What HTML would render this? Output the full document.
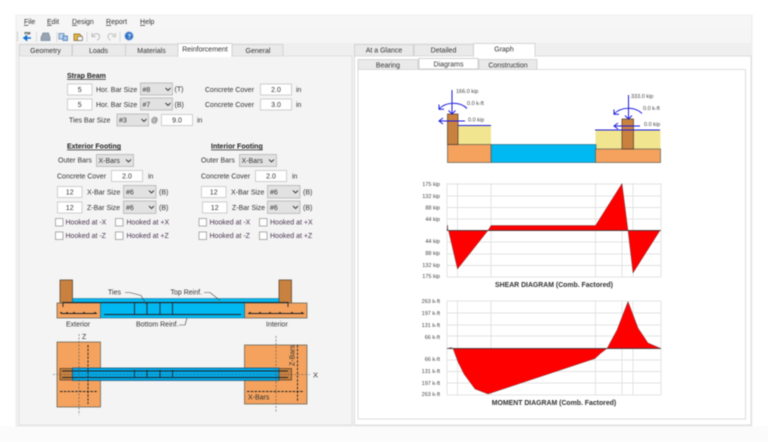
<!DOCTYPE html>
<html><head><meta charset="utf-8"><style>
html,body{margin:0;padding:0;background:#fff;width:768px;height:442px;overflow:hidden}
svg{display:block;filter:blur(.4px)}
text{font-family:"Liberation Sans",sans-serif;font-size:7px;fill:#333}
.b{font-weight:bold;text-decoration:underline;fill:#222}
.t{font-size:7px;text-anchor:middle}
.l{font-size:5.5px;text-anchor:end;fill:#444}
.s{font-size:5.5px;fill:#444}
.c{font-size:7px;text-anchor:middle}
.h{font-size:7px;fill:#4a3550}
.i{fill:#fff;stroke:#c4c4c4;stroke-width:.8}
.d{fill:#e2e2e2;stroke:#b4b4b4;stroke-width:.8}
.k{fill:#fff;stroke:#8e8e8e;stroke-width:.7}
.v{fill:none;stroke:#333;stroke-width:.9}
.g{stroke:#e2e2e2;stroke-width:.9;fill:none}
.ft{fill:#f4a25e;stroke:#5a5a50;stroke-width:.7}
.cl{fill:#c9813f;stroke:#4a3a28;stroke-width:.7}
.bm{fill:#00b8f2}
.bk{stroke:#222;fill:none;stroke-width:.9}
.bl{stroke:#1a1ae0;fill:none;stroke-width:1}
.tb{fill:#eaeaea;stroke:#c8c8c8;stroke-width:.7}
.ta{fill:#fff;stroke:#c8c8c8;stroke-width:.7}
</style></head><body>
<svg width="768" height="442" viewBox="0 0 768 442" xmlns="http://www.w3.org/2000/svg">
<rect width="768" height="442" fill="#fff"/>
<rect y="426" width="768" height="16" fill="#fbfbfb"/>
<rect x="16" y="15" width="736" height="411" fill="#f2f2f2" stroke="#e6e6e6" stroke-width=".7"/>
<rect x="16.5" y="15" width="735" height="15" fill="#f6f6f6"/>
<rect x="16.5" y="30" width="735" height="13" fill="#f5f5f5"/>
<rect x="16.5" y="43" width="735" height="13" fill="#efefef"/>
<text x="24" y="24"><tspan text-decoration="underline">F</tspan>ile</text>
<text x="47" y="24"><tspan text-decoration="underline">E</tspan>dit</text>
<text x="72" y="24"><tspan text-decoration="underline">D</tspan>esign</text>
<text x="106" y="24"><tspan text-decoration="underline">R</tspan>eport</text>
<text x="140" y="24"><tspan text-decoration="underline">H</tspan>elp</text>

<!-- toolbar -->
<path d="M17.500 32v10" stroke="#aaa" stroke-dasharray="1 1"/>
<text x="24.500" y="34.500" style="font-size:4px;font-weight:bold;fill:#222">PM</text>
<path d="M24 38h7M24 38l2.500-2v4z" stroke="#1070d0" stroke-width="1.500" fill="#1070d0"/>
<path d="M36.500 32v10M57 32v10M87 32v10M120 32v10" stroke="#d4d4d4" stroke-width=".8"/>
<path d="M41 37.500l2-4.500h5.500l1.500 4.500v3h-9z" fill="#98a4b4" stroke="#7a8698" stroke-width=".7"/>
<path d="M59 33.500h5v5.500h-5z" fill="#c4d8f0" stroke="#5078b0" stroke-width=".7"/>
<path d="M63 36h4.500v4.500h-4.500z" fill="#a8c8ec" stroke="#4070b0" stroke-width=".7"/>
<path d="M74 34h5.500l2 2v4.500h-7.500z" fill="#e8b840" stroke="#806020" stroke-width=".7"/>
<path d="M77.500 36.500h5v4h-5z" fill="#f4f4f4" stroke="#555" stroke-width=".6"/>
<path d="M93 35.500c2-2.500 6-2.500 6.500.5.300 2-1 3.500-2.500 4M92 33v3.500h3.500" fill="none" stroke="#c0c0c0" stroke-width="1.200"/>
<path d="M114.500 35.500c-2-2.500-6-2.500-6.500.5-.3 2 1 3.500 2.500 4M115.500 33v3.500H112" fill="none" stroke="#c8c8c8" stroke-width="1.200"/>
<circle cx="129" cy="36" r="4.200" fill="#2f6fc4" stroke="#8fb2e0" stroke-width=".8"/>
<text x="127.500" y="38.500" style="font-size:6px;font-weight:bold;fill:#fff">?</text>

<!-- left tabs -->
<rect x="19.500" y="44.500" width="52.500" height="11.500" class="tb"/>
<rect x="72.500" y="44.500" width="53" height="11.500" class="tb"/>
<rect x="125.500" y="44.500" width="53" height="11.500" class="tb"/>
<rect x="232" y="44.500" width="51" height="11.500" class="tb"/>
<rect x="19" y="56" width="333" height="369" fill="#f4f4f4" stroke="#dcdcdc" stroke-width=".8"/>
<rect x="178" y="43.500" width="54" height="13" fill="#fff" stroke="#c8c8c8" stroke-width=".7"/>
<path d="M178.400 56.500h53.200" stroke="#fff" stroke-width="1.200"/>
<text class="t" x="45.500" y="53">Geometry</text>
<text class="t" x="98.500" y="53">Loads</text>
<text class="t" x="151.500" y="53">Materials</text>
<text class="t" x="205" y="51.500">Reinforcement</text>
<text class="t" x="258" y="53">General</text>

<!-- strap beam -->
<text class="b" x="67" y="78">Strap Beam</text>
<rect class="i" x="67.500" y="84" width="24.500" height="11"/><text class="c" x="79.700" y="92">5</text>
<text x="96" y="92">Hor. Bar Size</text>
<rect class="d" x="140.500" y="83" width="32" height="12"/><text x="142.500" y="92">#8</text><path class="v" d="M165.500 88l2.500 2.500 2.500-2.500"/>
<text x="174.500" y="91.500">(T)</text>
<text x="205" y="92">Concrete Cover</text>
<rect class="i" x="260.500" y="84" width="31" height="11"/><text class="c" x="276" y="92">2.0</text>
<text x="296" y="92">in</text>
<rect class="i" x="67.500" y="99" width="24.500" height="11"/><text class="c" x="79.700" y="107">5</text>
<text x="96" y="107">Hor. Bar Size</text>
<rect class="d" x="140.500" y="98" width="32" height="12"/><text x="142.500" y="107">#7</text><path class="v" d="M165.500 103l2.500 2.500 2.500-2.500"/>
<text x="174.500" y="107">(B)</text>
<text x="205" y="107">Concrete Cover</text>
<rect class="i" x="260.500" y="99" width="31" height="11"/><text class="c" x="276" y="107">3.0</text>
<text x="296" y="107">in</text>
<text x="69" y="122.500">Ties Bar Size</text>
<rect class="d" x="117" y="114" width="31.500" height="12"/><text x="119" y="122.500">#3</text><path class="v" d="M141.500 119l2.500 2.500 2.500-2.500"/>
<text x="151" y="122.500">@</text>
<rect class="i" x="161.500" y="114.500" width="31" height="11"/><text class="c" x="177" y="122.500">9.0</text>
<text x="197" y="122.500">in</text>

<!-- exterior -->
<text class="b" x="67" y="148.500">Exterior Footing</text>
<text class="b" x="211" y="148.500">Interior Footing</text>
<text x="58" y="162.500">Outer Bars</text>
<rect class="d" x="96.500" y="154.500" width="37" height="12"/><text x="98.500" y="163">X-Bars</text><path class="v" d="M126 159.500l2.500 2.500 2.500-2.500"/>
<text x="201" y="162.500">Outer Bars</text>
<rect class="d" x="239.500" y="154.500" width="37" height="12"/><text x="241.500" y="163">X-Bars</text><path class="v" d="M269 159.500l2.500 2.500 2.500-2.500"/>
<text x="57" y="178.500">Concrete Cover</text>
<rect class="i" x="111.500" y="170.500" width="31" height="11"/><text class="c" x="127" y="178.500">2.0</text><text x="148" y="178.500">in</text>
<text x="201" y="178.500">Concrete Cover</text>
<rect class="i" x="255.500" y="170.500" width="31" height="11"/><text class="c" x="271" y="178.500">2.0</text><text x="292" y="178.500">in</text>

<rect class="i" x="57.500" y="186.500" width="24.500" height="11"/><text class="c" x="69.700" y="194.500">12</text>
<text x="87" y="194.500">X-Bar Size</text>
<rect class="d" x="123.500" y="185.500" width="32.500" height="12.500"/><text x="126" y="194.500">#6</text><path class="v" d="M149 190.500l2.500 2.500 2.500-2.500"/>
<text x="159" y="194.500">(B)</text>
<rect class="i" x="201.500" y="186.500" width="24.500" height="11"/><text class="c" x="213.700" y="194.500">12</text>
<text x="231" y="194.500">X-Bar Size</text>
<rect class="d" x="267.500" y="185.500" width="32.500" height="12.500"/><text x="270" y="194.500">#6</text><path class="v" d="M293 190.500l2.500 2.500 2.500-2.500"/>
<text x="303" y="194.500">(B)</text>

<rect class="i" x="57.500" y="202" width="24.500" height="11"/><text class="c" x="69.700" y="210">12</text>
<text x="87" y="210">Z-Bar Size</text>
<rect class="d" x="123.500" y="201" width="32.500" height="12.500"/><text x="126" y="210">#6</text><path class="v" d="M149 206l2.500 2.500 2.500-2.500"/>
<text x="159" y="210">(B)</text>
<rect class="i" x="202.500" y="202" width="24.500" height="11"/><text class="c" x="214.700" y="210">12</text>
<text x="232" y="210">Z-Bar Size</text>
<rect class="d" x="267.500" y="201" width="32.500" height="12.500"/><text x="270" y="210">#6</text><path class="v" d="M293 206l2.500 2.500 2.500-2.500"/>
<text x="303" y="210">(B)</text>

<rect class="k" x="55.500" y="218.500" width="7.500" height="7.500"/><text class="h" x="65.500" y="224.500">Hooked at -X</text>
<rect class="k" x="115.500" y="218.500" width="7.500" height="7.500"/><text class="h" x="126.500" y="224.500">Hooked at +X</text>
<rect class="k" x="199" y="218.500" width="7.500" height="7.500"/><text class="h" x="209.500" y="224.500">Hooked at -X</text>
<rect class="k" x="259.500" y="218.500" width="7.500" height="7.500"/><text class="h" x="270" y="224.500">Hooked at +X</text>
<rect class="k" x="55.500" y="232" width="7.500" height="7.500"/><text class="h" x="65.500" y="238">Hooked at -Z</text>
<rect class="k" x="115.500" y="232" width="7.500" height="7.500"/><text class="h" x="126.500" y="238">Hooked at +Z</text>
<rect class="k" x="199" y="232" width="7.500" height="7.500"/><text class="h" x="209.500" y="238">Hooked at -Z</text>
<rect class="k" x="259.500" y="232" width="7.500" height="7.500"/><text class="h" x="270" y="238">Hooked at +Z</text>

<!-- section drawing -->
<rect class="cl" x="60" y="280" width="12.500" height="23"/>
<rect class="cl" x="279" y="280" width="12.500" height="23"/>
<rect x="72.500" y="298.500" width="206.500" height="5" fill="#00b8f2" stroke="#1a5a7a" stroke-width=".5"/>
<rect class="ft" x="57" y="303" width="43.500" height="15"/>
<rect class="ft" x="244.500" y="303" width="62.500" height="15"/>
<rect class="bm" x="100.500" y="303" width="144" height="15" stroke="#1a5a7a" stroke-width=".5"/>
<path class="bk" stroke-width="1" d="M63 307v-4.500h225v4.500M104 314.500h137M134.500 302v12.500M147 302v12.500M160 302v12.500M172.500 302v12.500M61 313.500h36M248 313.500h56"/>
<path d="M61 313.500v-1.500M67 313.500v-1.500M74 313.500v-1.500M84 313.500v-1.500M95 313.500v-1.500M250 313.500v-1.500M260 313.500v-1.500M270 313.500v-1.500M280 313.500v-1.500M292 313.500v-1.500M302 313.500v-1.500" stroke="#222" stroke-width="1.500"/>
<text x="108" y="294.500">Ties</text>
<text x="170.500" y="294.500">Top Reinf.</text>
<text x="136" y="326.500">Bottom Reinf.</text>
<text x="66" y="326.500">Exterior</text>
<text x="266" y="326.500">Interior</text>
<path d="M125 292.500h5l11 3 6 10M204 292.500h6l10 8M179 325h6l2-7" stroke="#444" stroke-width=".6" fill="none"/>

<!-- plan drawing -->
<rect class="ft" x="57" y="342" width="43.500" height="65"/>
<rect class="ft" x="244.500" y="345" width="62.500" height="59"/>
<rect class="cl" x="60" y="368.500" width="12.500" height="11.500"/>
<rect class="cl" x="279" y="368.500" width="12.500" height="11.500"/>
<rect x="72.500" y="368" width="206.500" height="12.500" fill="#00a8e8" stroke="#1a4a6a" stroke-width=".7"/>
<path class="bk" d="M62 371h226M62 377.500h226M134.500 370v8M147 370v8M160 370v8M172.500 370v8" stroke-width=".8"/>
<path d="M79 334v81M276 336v77M53 374.500h257" stroke="#555" stroke-width=".6" stroke-dasharray="2 1.500" fill="none"/>
<path d="M88 345v59M60 391.500h38M297.500 345v57M247 391.500h57" stroke="#222" stroke-width=".9" stroke-dasharray="2.500 1.300" fill="none"/>
<text x="82" y="339">Z</text>
<text x="313" y="377.500" style="font-size:7.500px">X</text>
<text x="248" y="399.500">X-Bars</text>
<text transform="translate(294.500,366) rotate(-90)">Z-Bars</text>

<!-- right panel -->
<rect x="354" y="56" width="398" height="369" fill="#f0f0f0"/>
<rect x="354" y="43" width="398" height="13" fill="#efefef"/>
<rect x="354.500" y="44.500" width="59" height="11.500" class="tb"/>
<rect x="414" y="44.500" width="59.500" height="11.500" class="tb"/>
<rect x="354.500" y="56" width="396.500" height="369" fill="#fff" stroke="#d8d8d8" stroke-width=".8"/>
<rect x="473.500" y="43.500" width="61.500" height="13" fill="#fff" stroke="#c8c8c8" stroke-width=".7"/>
<path d="M474 56.500h60.500" stroke="#fff" stroke-width="1.200"/>
<text class="t" x="384" y="52.500">At a Glance</text>
<text class="t" x="443.500" y="52.500">Detailed</text>
<text class="t" x="504" y="51.500">Graph</text>
<rect x="358" y="59.500" width="60" height="10" class="tb"/>
<rect x="479" y="59.500" width="58" height="10" class="tb"/>
<rect x="358" y="69.500" width="387.500" height="349.500" fill="#fff" stroke="#d4d4d4" stroke-width=".8"/>
<rect x="419" y="58.500" width="59" height="10.500" fill="#fff" stroke="#bcbcbc" stroke-width=".7"/>
<text class="t" x="388" y="67.500">Bearing</text>
<text class="t" x="448.500" y="66.500">Diagrams</text>
<text class="t" x="508" y="67.500">Construction</text>

<!-- elevation -->
<rect x="458" y="126" width="33" height="18.500" fill="#f1e68f"/>
<rect x="595.500" y="130" width="65" height="19" fill="#f1e68f"/>
<rect x="491" y="144.500" width="105" height="18" fill="#00b8f2" stroke="#2a5a70" stroke-width=".6"/>
<rect class="ft" x="447.500" y="144.500" width="43.500" height="18"/>
<rect class="ft" x="595.500" y="149" width="65" height="13.500"/>
<rect class="cl" x="447.500" y="114" width="10.500" height="30.500"/>
<rect class="cl" x="622" y="119" width="11.500" height="30"/>
<path class="bl" d="M458 125.500h33M595 130h65"/>
<path class="bl" stroke-width="1.100" d="M452 90v24M448.500 110.500l3.500 3.500 3.500-3.500M628.500 95v24M625 115.500l3.500 3.500 3.500-3.500"/>
<path class="bl" stroke-width="1.100" d="M439 121h26M443 118l-4 3 4 3M614 126h26M618 123l-4 3 4 3"/>
<path class="bl" stroke-width="1.100" d="M467 108.500c-7-7-21-7-28 .5M439 104.500v4.700h5M642 113.500c-7-7-21-7-28 .5M614 109.500v4.700h5"/>
<text class="s" x="456" y="93">166.0 kip</text>
<text class="s" x="467" y="105">0.0 k-ft</text>
<text class="s" x="468" y="121.500">0.0 kip</text>
<text class="s" x="631" y="98">333.0 kip</text>
<text class="s" x="643" y="110">0.0 k-ft</text>
<text class="s" x="644" y="126">0.0 kip</text>

<!-- shear -->
<path class="g" d="M447 184h214M447 196h214M447 207.500h214M447 219h214M447 242h214M447 254h214M447 265.500h214M447 277h214M447 183v94M457.500 183v94M491 183v94M595.500 183v94M622 183v94M633 183v94M661 183v94"/>
<path d="M447.500 225l.5 5.500-1-.2zM448.500 230.500L457.500 269 488 230.500zM488 230.500l3-5h104.500l26.500-42 6 47zM628 230.500l5 42.500 27-42.500z" fill="#f00" stroke="#444" stroke-width=".4"/>
<path d="M447 230.500h214" stroke="#333" stroke-width=".7"/>
<text class="l" x="440" y="186">175 kip</text>
<text class="l" x="440" y="198">132 kip</text>
<text class="l" x="440" y="209.500">88 kip</text>
<text class="l" x="440" y="221">44 kip</text>
<text class="l" x="440" y="243">44 kip</text>
<text class="l" x="440" y="255">88 kip</text>
<text class="l" x="440" y="267">132 kip</text>
<text class="l" x="440" y="278">175 kip</text>
<text x="554" y="287" text-anchor="middle" style="font-size:6.900px;font-weight:bold;fill:#333">SHEAR DIAGRAM (Comb. Factored)</text>

<!-- moment -->
<path class="g" d="M447 301h214M447 313h214M447 325h214M447 336h214M447 360h214M447 371.500h214M447 383h214M447 395h214M457.500 301v94M491 301v94M595.500 301v94M622 301v94M633 301v94M661 301v94M447 301v94"/>
<path d="M448 348.500l3-1 2 1zM453 348.500l5 13.500 6 12 11 15 13 5 107-35.500 6-5.500 6-4.500zM607 348.500l10-18.500 11-28.500 10 26.500 10 15 13 5.500z" fill="#f00" stroke="#444" stroke-width=".4"/>
<path d="M447 348.500h214" stroke="#333" stroke-width=".7"/>
<text class="l" x="440" y="303">263 k-ft</text>
<text class="l" x="440" y="315">197 k-ft</text>
<text class="l" x="440" y="327">131 k-ft</text>
<text class="l" x="440" y="339">66 k-ft</text>
<text class="l" x="440" y="361">66 k-ft</text>
<text class="l" x="440" y="373">131 k-ft</text>
<text class="l" x="440" y="385">197 k-ft</text>
<text class="l" x="440" y="396">263 k-ft</text>
<text x="554" y="405" text-anchor="middle" style="font-size:6.900px;font-weight:bold;fill:#333">MOMENT DIAGRAM (Comb. Factored)</text>
</svg>
</body></html>
